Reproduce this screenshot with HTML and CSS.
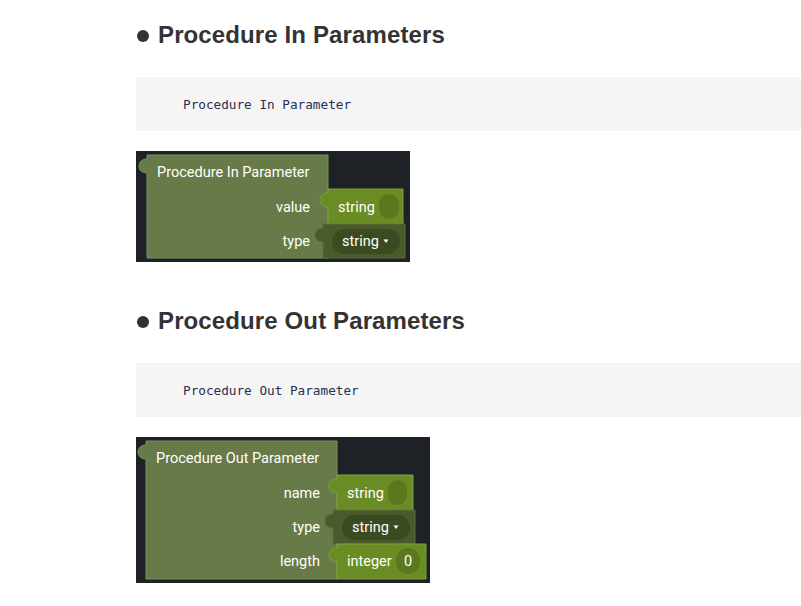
FILE: index.html
```html
<!DOCTYPE html>
<html>
<head>
  <meta charset="utf-8">
  <title>Procedure Parameters</title>
  <link rel="stylesheet" href="styles.css">
</head>

<body>
  <main class="doc">
    <section class="topic">
      <h2 class="topic-title">Procedure In Parameters</h2>
      <pre class="code"><code>Procedure In Parameter</code></pre>
      <figure class="ws">
        <svg width="274" height="111" viewBox="0 0 274 111">
          <path class="blk-main" d="M11,4H192V107H11V22c-5,0 -8,-3 -8,-7s3,-7 8,-7Z"/>
          <text x="21" y="26">Procedure In Parameter</text>
          <text class="end" x="174" y="61">value</text>
          <text class="end" x="174" y="95">type</text>

          <path class="blk-value" d="M192,38H267V73H192V56c-5,0 -8,-3 -8,-7s3,-7 8,-7Z"/>
          <text x="202" y="61">string</text>
          <rect class="fld-value" x="243" y="43" width="20" height="25" rx="10"/>

          <path class="blk-drop" d="M187,73H269V107H187V91c-5,0 -8,-3 -8,-7s3,-7 8,-7Z"/>
          <rect class="fld-drop" x="196" y="78" width="68" height="25" rx="12.5"/>
          <text x="206" y="95">string</text>
          <path class="arrow" d="M247.5,88.5h5l-2.5,3.5z"/>
        </svg>
      </figure>
    </section>

    <section class="topic">
      <h2 class="topic-title">Procedure Out Parameters</h2>
      <pre class="code"><code>Procedure Out Parameter</code></pre>
      <figure class="ws">
        <svg width="294" height="146" viewBox="0 0 294 146">
          <path class="blk-main" d="M10,4H201V142H10V22c-5,0 -8,-3 -8,-7s3,-7 8,-7Z"/>
          <text x="20" y="26">Procedure Out Parameter</text>
          <text class="end" x="184" y="61">name</text>
          <text class="end" x="184" y="95">type</text>
          <text class="end" x="184" y="129">length</text>

          <path class="blk-value" d="M201,38H277V73H201V56c-5,0 -8,-3 -8,-7s3,-7 8,-7Z"/>
          <text x="211" y="61">string</text>
          <rect class="fld-value" x="252" y="43" width="19" height="25" rx="9.5"/>

          <path class="blk-drop" d="M197,73H279V107H197V91c-5,0 -8,-3 -8,-7s3,-7 8,-7Z"/>
          <rect class="fld-drop" x="206" y="78" width="68" height="25" rx="12.5"/>
          <text x="216" y="95">string</text>
          <path class="arrow" d="M257.5,88.5h5l-2.5,3.5z"/>

          <path class="blk-value" d="M201,107H290V142H201V125c-5,0 -8,-3 -8,-7s3,-7 8,-7Z"/>
          <text x="211" y="129">integer</text>
          <rect class="fld-value" x="260" y="111" width="24" height="26" rx="12"/>
          <text class="mid" x="272" y="129">0</text>
        </svg>
      </figure>
    </section>
  </main>
</body>

</html>
```

FILE: styles.css
```css
html, body {
  margin: 0;
  padding: 0;
  background: #fff;
}

body {
  font-family: "Liberation Sans", Arial, sans-serif;
  color: #333;
}

.doc {
  padding: 20px 0 0 136px;
}

.topic {
  margin-bottom: 44px;
}

.topic-title {
  margin: 0 0 27px;
  padding-left: 1px;
  font-size: 24px;
  line-height: 30px;
  font-weight: bold;
  letter-spacing: 0.12px;
  color: #333;
}

.topic-title::before {
  content: "";
  display: inline-block;
  width: 12px;
  height: 12px;
  border-radius: 50%;
  background: #333;
  margin-right: 9px;
  vertical-align: 1px;
}

.code {
  margin: 0;
  padding: 18px 0 16px 47px;
  background: #f5f5f5;
  font-family: "DejaVu Sans Mono", "Liberation Mono", monospace;
  font-size: 12.7px;
  line-height: 20px;
  color: #27304f;
}

.ws {
  margin: 20px 0 0;
  padding: 0;
  line-height: 0;
}

.ws svg {
  display: block;
  background: #1e2227;
}

.ws text {
  font-family: Roboto, "Noto Sans", sans-serif;
  font-size: 14.5px;
  font-weight: 400;
  fill: #fff;
}

.ws text.end {
  text-anchor: end;
}

.ws text.mid {
  text-anchor: middle;
}

.blk-main {
  fill: #687a48;
  stroke: #7e8f5e;
  stroke-width: 1;
}

.blk-value {
  fill: #6a8c24;
  stroke: #80a03c;
  stroke-width: 1;
}

.fld-value {
  fill: #5b781f;
}

.blk-drop {
  fill: #4a5a2a;
  stroke: #5c6c3a;
  stroke-width: 1;
}

.fld-drop {
  fill: #3c4a21;
}

.arrow {
  fill: #fff;
}
```
